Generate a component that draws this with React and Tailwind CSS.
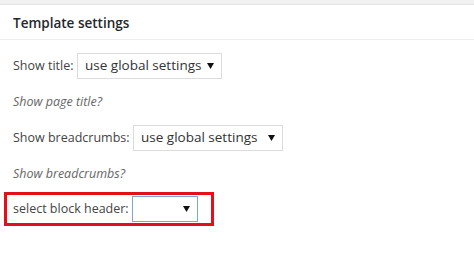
import React from "react";

function Arrow() {
  return (
    <svg width="7" height="6" viewBox="0 0 7 6" className="shrink-0">
      <polygon points="0,0 7,0 3.5,6" fill="#111" />
    </svg>
  );
}

function Select({ width, text, focused }) {
  return (
    <div
      className={`flex items-center justify-between h-[26px] bg-white pl-[7px] pr-[7px] text-[13.5px] text-[#333] ${
        focused ? "border border-[#7ea6d3]" : "border border-[#dcdcdc]"
      }`}
      style={{ width }}
    >
      <span className="leading-none">{text}</span>
      <Arrow />
    </div>
  );
}

export default function App() {
  return (
    <div
      className="w-[474px] h-[254px] bg-white overflow-hidden"
      style={{ fontFamily: '"Open Sans", "Noto Sans", sans-serif' }}
    >
      <div className="h-[5px] bg-[#f1f1f1] border-b border-[#e4e4e4]" />
      <div className="h-[35px] flex items-center pt-[3px] pl-[13px] border-b border-[#eeeeee] text-[13.5px] font-semibold text-[#23282d]">
        Template settings
      </div>
      <div className="pl-[13px] text-[12.5px] text-[#444]">
        <div className="flex items-center mt-[13px]">
          <span className="w-[64px]">Show title:</span>
          <Select width={145} text="use global settings" />
        </div>
        <div className="mt-[14px] h-[18px] leading-[18px] italic text-[#666]">Show page title?</div>
        <div className="flex items-center mt-[14px]">
          <span className="w-[120px]">Show breadcrumbs:</span>
          <Select width={150} text="use global settings" />
        </div>
        <div className="mt-[14px] h-[18px] leading-[18px] italic text-[#666]">Show breadcrumbs?</div>
      </div>
      <div className="ml-[4px] mt-[9px] w-[210px] h-[34px] border-[3px] border-[#e3101b] flex items-center pl-[6px]">
        <span className="text-[12.5px] text-[#444] w-[119px]">select block header:</span>
        <Select width={66} text="" focused />
      </div>
    </div>
  );
}
